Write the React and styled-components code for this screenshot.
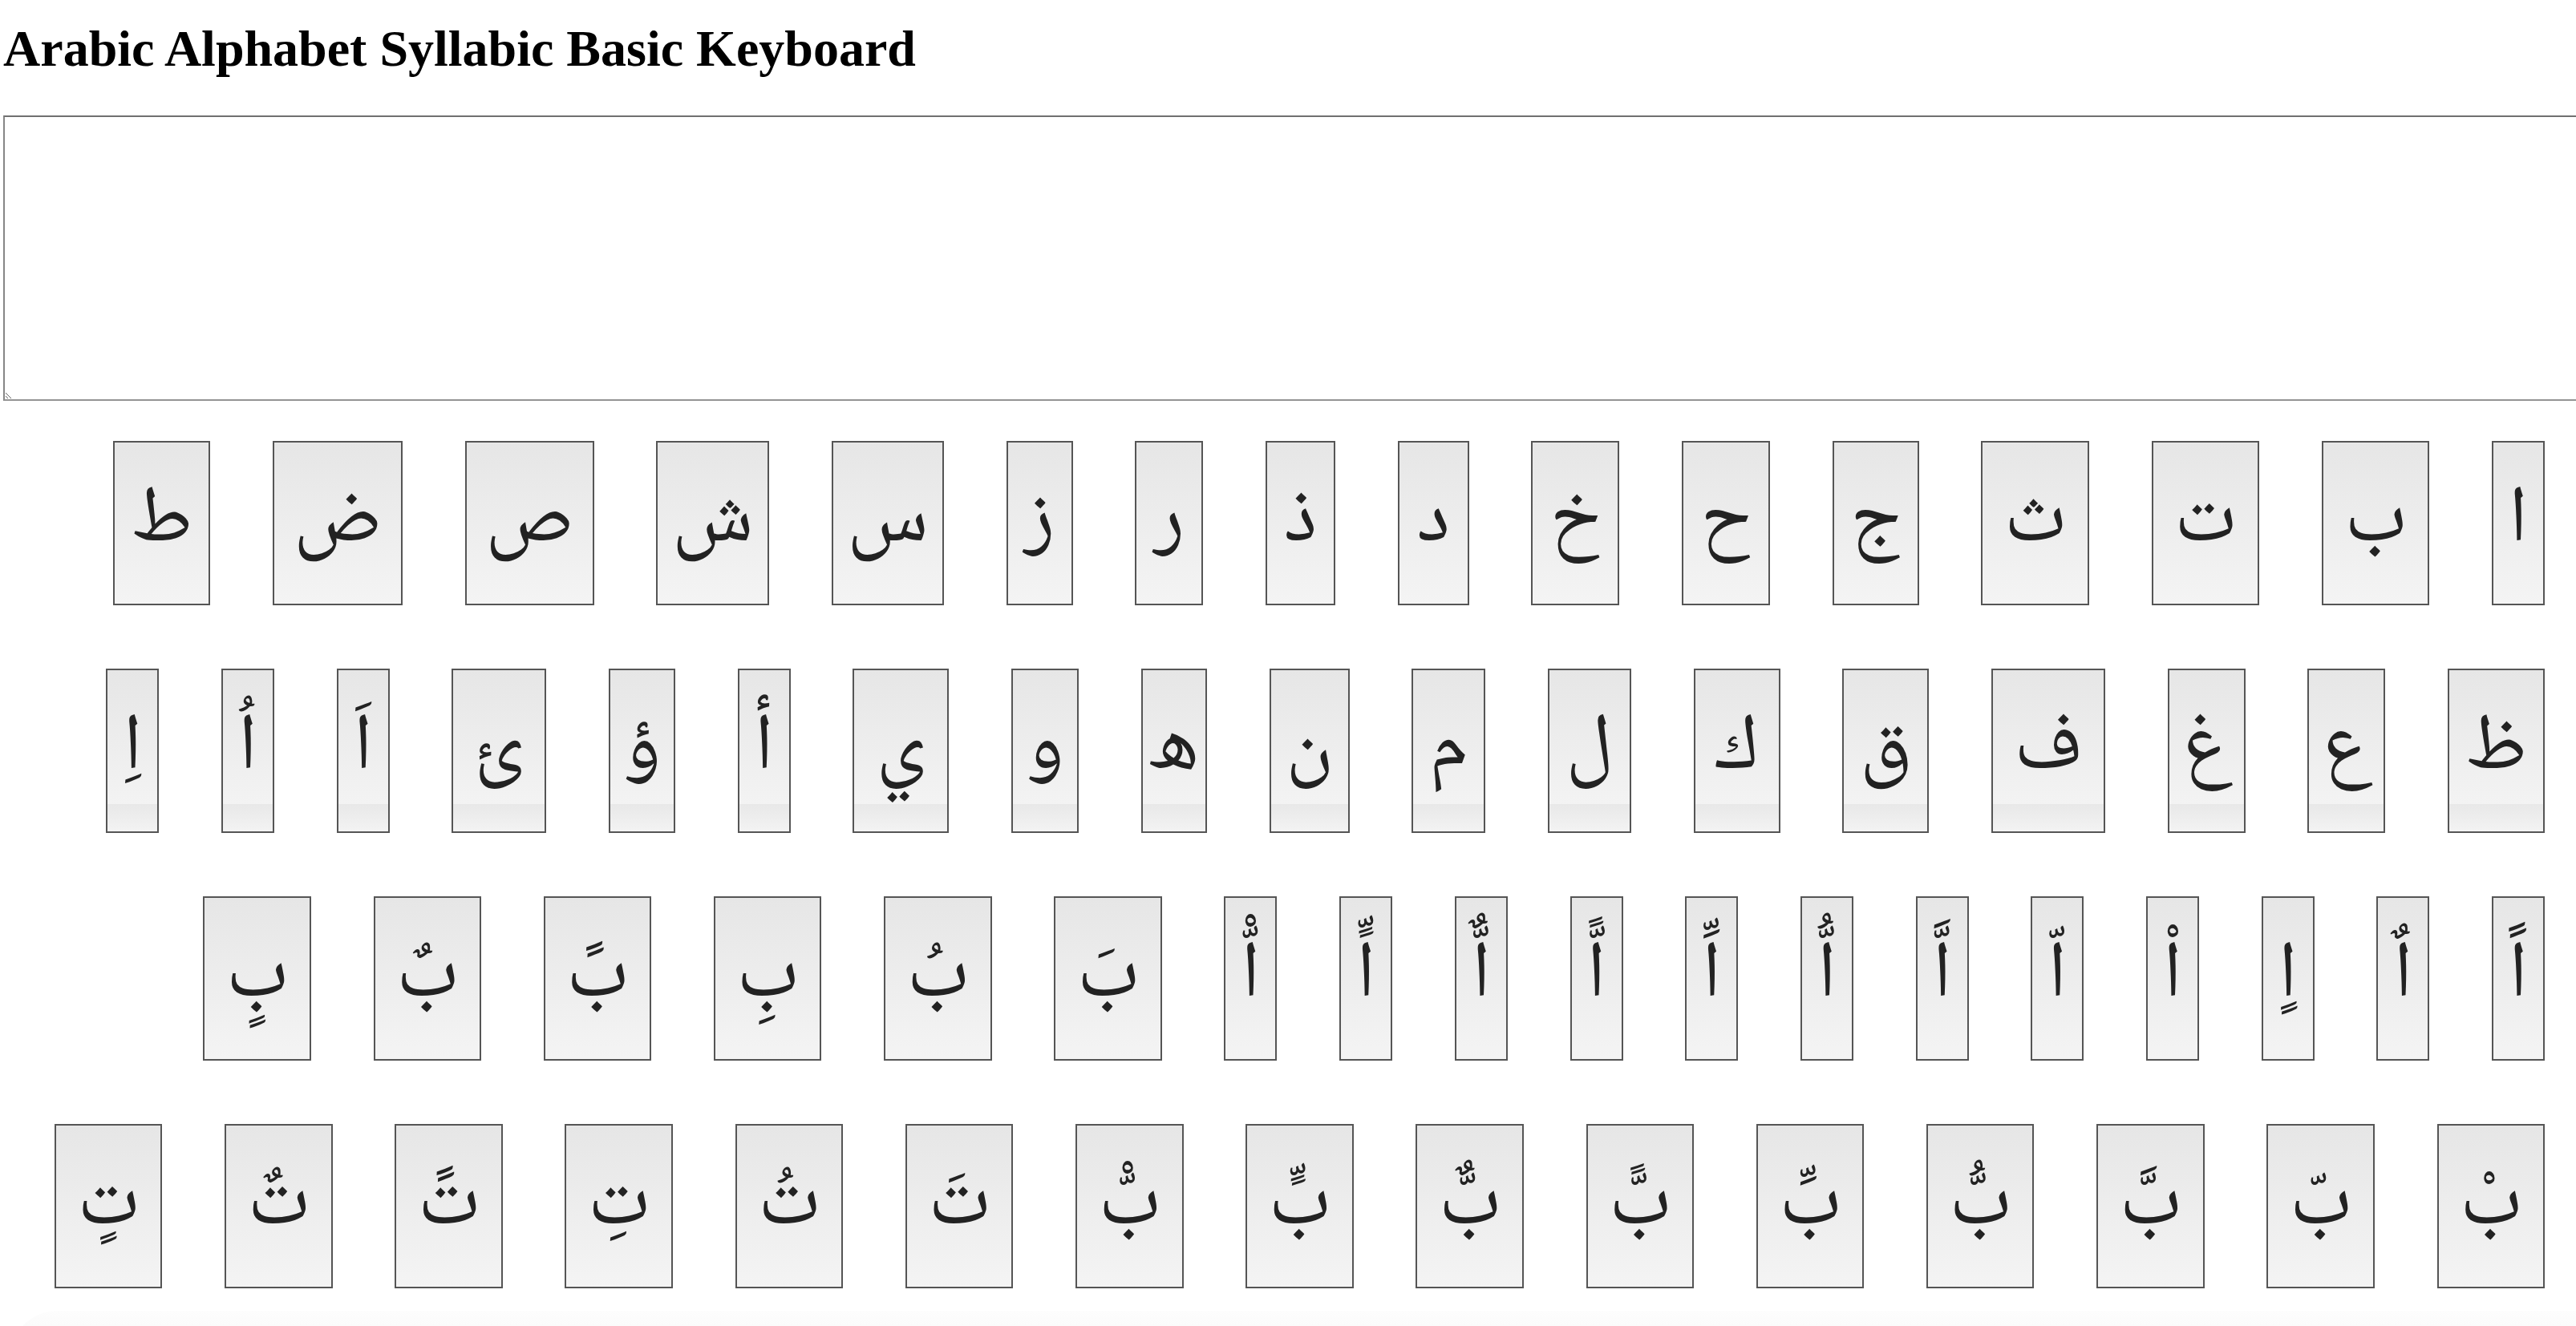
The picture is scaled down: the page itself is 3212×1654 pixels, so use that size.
import styled, { createGlobalStyle } from "styled-components"

const GlobalStyle = createGlobalStyle`
  html, body {
    margin: 0;
    padding: 0;
    background: #fff;
    overflow: hidden;
  }
`

const Page = styled.div`
  padding: 24px 0 0 4px;
`

const Title = styled.h1`
  margin: 0;
  font-family: "Liberation Serif", "Times New Roman", serif;
  font-weight: 700;
  font-size: 64px;
  line-height: 74px;
  color: #000;
`

const Editor = styled.textarea`
  display: block;
  box-sizing: border-box;
  margin: 46px 0 0 0;
  width: 100vw;
  height: 356px;
  padding: 4px;
  border: 2px solid;
  border-color: #707070 #707070 #949494 #878787;
  background: #fff;
  font-family: "DejaVu Sans", sans-serif;
  font-size: 40px;
  outline: none;
`

const Keyboard = styled.div`
  display: flex;
  flex-direction: column;
  gap: 79px;
  margin-top: 50px;
`

const Row = styled.div`
  display: flex;
  direction: rtl;
  gap: 77.7px;
  padding-right: 39px;
`

const Key = styled.button`
  box-sizing: border-box;
  flex: none;
  width: ${(p) => p.$w}px;
  height: 205px;
  padding: 0 0 ${(p) => p.$drop}px 0;
  border: 2px solid #555;
  border-radius: 0;
  background: ${(p) =>
    p.$banded
      ? "linear-gradient(#e6e6e6, #f3f3f3) top / 100% 167px no-repeat, linear-gradient(#e8e8e8, #f3f3f3) bottom / 100% 34px no-repeat"
      : "linear-gradient(#e6e6e6, #f4f4f4)"};
  color: #222;
  font-family: "Noto Naskh Arabic", "Noto Sans Arabic", "DejaVu Sans", sans-serif;
  font-size: 100px;
  line-height: 201px;
  text-align: center;
  overflow: visible;
  white-space: nowrap;
  cursor: pointer;
`

const Footer = styled.div`
  margin: 28px 0 0 8px;
  height: 60px;
  border-top-left-radius: 90px;
  background: linear-gradient(#fdfdfd, #f6f6f6);
`

const A = "\u0627"
const B = "\u0628"
const T = "\u062A"
const FATHA = "\u064E"
const DAMMA = "\u064F"
const KASRA = "\u0650"
const FATHATAN = "\u064B"
const DAMMATAN = "\u064C"
const KASRATAN = "\u064D"
const SHADDA = "\u0651"
const SUKUN = "\u0652"

const marks = [
  FATHA, DAMMA, KASRA, FATHATAN, DAMMATAN, KASRATAN, SUKUN, SHADDA,
  SHADDA + FATHA, SHADDA + DAMMA, SHADDA + KASRA,
  SHADDA + FATHATAN, SHADDA + DAMMATAN, SHADDA + KASRATAN, SHADDA + SUKUN,
]

const alifKeys = marks.map((m) => [A + m, 66])
const baKeys = marks.map((m) => [B + m, 134.5])
const taKeys = marks.slice(0, 6).map((m) => [T + m, 134.5])

// rows listed right to left, [label, key width]
const rows = [
  [
    ["ا", 66], ["ب", 134.5], ["ت", 134.5], ["ث", 134.5], ["ج", 108], ["ح", 110],
    ["خ", 110], ["د", 89], ["ذ", 87], ["ر", 85], ["ز", 83], ["س", 140],
    ["ش", 141], ["ص", 161], ["ض", 162], ["ط", 121],
  ],
  [
    ["ظ", 121], ["ع", 97], ["غ", 97], ["ف", 142], ["ق", 108], ["ك", 108],
    ["ل", 104], ["م", 92], ["ن", 100], ["ه", 82], ["و", 84], ["ي", 120],
    ["أ", 66], ["ؤ", 83], ["ئ", 118], ...alifKeys.slice(0, 3),
  ],
  [...alifKeys.slice(3), ...baKeys.slice(0, 6)],
  [...baKeys.slice(6), ...taKeys],
]

const App = () => {
  return (
    <Page>
      <GlobalStyle />
      <Title>Arabic Alphabet Syllabic Basic Keyboard</Title>
      <Editor dir="rtl" />
      <Keyboard>
        {rows.map((row, i) => (
          <Row key={i}>
            {row.map(([label, w]) => (
              <Key key={label} $w={w} $drop={18} $banded={i === 1}>
                {label}
              </Key>
            ))}
          </Row>
        ))}
      </Keyboard>
      <Footer />
    </Page>
  )
}

export default App
